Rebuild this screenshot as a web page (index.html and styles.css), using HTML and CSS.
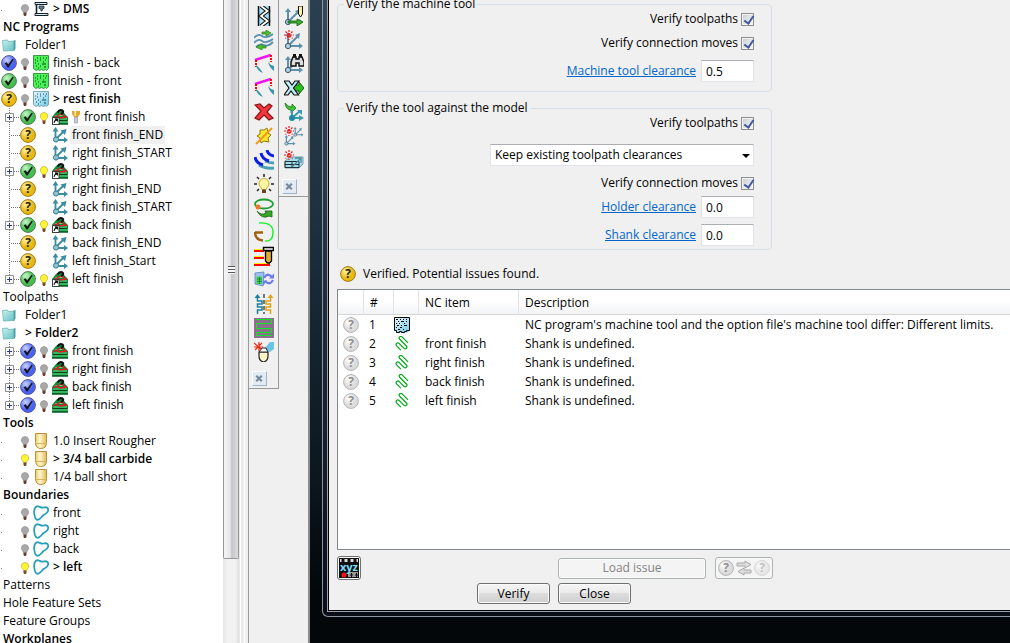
FILE: index.html
```html
<!DOCTYPE html>
<html lang="en">
<head>
<meta charset="UTF-8">
<meta name="viewport" content="width=device-width, initial-scale=1.0">
<title>NC Program Verification</title>
<link rel="stylesheet" href="styles.css">
</head>
<body>

<svg class="defs" aria-hidden="true">
  <defs>
    <radialGradient id="gBlue" cx="35%" cy="30%"><stop offset="0" stop-color="#ccd4ff"/><stop offset="1" stop-color="#4a62f4"/></radialGradient>
    <radialGradient id="gGreen" cx="35%" cy="30%"><stop offset="0" stop-color="#c8f8ca"/><stop offset="1" stop-color="#45bd50"/></radialGradient>
    <radialGradient id="gGold" cx="35%" cy="30%"><stop offset="0" stop-color="#fff3a0"/><stop offset="1" stop-color="#e8b810"/></radialGradient>
    <radialGradient id="gGrey" cx="35%" cy="30%"><stop offset="0" stop-color="#ffffff"/><stop offset="1" stop-color="#dcdcdc"/></radialGradient>
    <linearGradient id="gTool"><stop offset="0" stop-color="#efcb60"/><stop offset=".4" stop-color="#fff8d6"/><stop offset="1" stop-color="#e3b84a"/></linearGradient>
    <linearGradient id="gFolder" x2="1" y2="1"><stop offset="0" stop-color="#c8f3f1"/><stop offset="1" stop-color="#63bfc0"/></linearGradient>
    <linearGradient id="gCyan" x2="1" y2="1"><stop offset="0" stop-color="#e4f8ff"/><stop offset="1" stop-color="#6fcbe9"/></linearGradient>
  </defs>
  <symbol id="check-blue" viewBox="0 0 16 16"><circle cx="8" cy="8" r="7.4" fill="url(#gBlue)" stroke="#56589c"/><path d="M3.6 8.2l2-1 1.6 2.2 4.4-5.6 1.2.6-5.2 8.2H6.6z" fill="#16161c"/></symbol>
  <symbol id="check-green" viewBox="0 0 16 16"><circle cx="8" cy="8" r="7.4" fill="url(#gGreen)" stroke="#4c7c50"/><path d="M3.6 8.2l2-1 1.6 2.2 4.4-5.6 1.2.6-5.2 8.2H6.6z" fill="#10180f"/></symbol>
  <symbol id="ask" viewBox="0 0 16 16"><circle cx="8" cy="8" r="7.4" fill="url(#gGold)" stroke="#a07d1c"/><text x="8" y="12.4" class="mark">?</text></symbol>
  <symbol id="ask-grey" viewBox="0 0 16 16"><circle cx="8" cy="8" r="7.4" fill="url(#gGrey)" stroke="#b4b4b4"/><text x="8" y="12.4" class="mark mark-grey">?</text></symbol>
  <symbol id="bulb" viewBox="0 0 16 16"><path d="M8 3.5a3.7 3.7 0 0 0-2.2 6.7l.7 1.3h3l.7-1.3A3.7 3.7 0 0 0 8 3.5z" fill="#a8a8a8" stroke="#8c8c8c" stroke-width=".6"/><path d="M6.5 11.5h3v2.6l-.8 1H7.3l-.8-1z" fill="#6b3a34"/></symbol>
  <symbol id="bulb-on" viewBox="0 0 16 16"><path d="M8 3.5a3.7 3.7 0 0 0-2.2 6.7l.7 1.3h3l.7-1.3A3.7 3.7 0 0 0 8 3.5z" fill="#fff52e" stroke="#b0a332" stroke-width=".6"/><path d="M6.5 11.5h3v2.6l-.8 1H7.3l-.8-1z" fill="#7b4a22"/></symbol>
  <symbol id="folder" viewBox="0 0 16 16"><path d="M1.5 3.5l5-.5 1 1.5 6-.5v9.5l-11 .5z" fill="url(#gFolder)" stroke="#6fb3b4" stroke-width=".8"/><path d="M12.5 4l2-1.2v8.6l-1.8 2.2z" fill="#4f9fa2"/></symbol>
  <symbol id="machine" viewBox="0 0 16 16"><path d="M2 1.5h12v2H2zM2 12.5h13v2H2z" fill="#d9edf5" stroke="#14202a"/><path d="M3.5 3.5v9" stroke="#14202a" stroke-width="1.6"/><path d="M6 5h5v2.5H9.8L9 10H8l-.5-2.500H6z" fill="#5d7f93" stroke="#14202a" stroke-width=".7"/></symbol>
  <symbol id="tape" viewBox="0 0 16 16"><path d="M.5.5h15v13l-2 2-1-1-2 1-2-1-2 1-1.500-1-2 1-2.500-2z" fill="#4af257" stroke="#2a7a31" stroke-width=".8"/><path d="M2 5h1M4 3h1M4 6h1M7 3h1M7 5h1M10 3h1M13 3h1M12 5h1M10 7h1M2 8h1M5 9h1M9 9h4M3 11h1M7 11h1M11 12h2M5 13h1" stroke="#0a4312"/></symbol>
  <symbol id="tape-cyan" viewBox="0 0 16 16"><path d="M.5.5h15v13l-2 2-1-1-2 1-2-1-2 1-1.500-1-2 1-2.500-2z" fill="url(#gCyan)" stroke="#5f93a8" stroke-width=".8"/><path d="M2 5h1M4 3h1M4 6h1M7 3h1M7 5h1M10 3h1M13 3h1M12 5h1M10 7h1M2 8h1M5 9h1M9 9h4M3 11h1M7 11h1M11 12h2M5 13h1" stroke="#1b4658"/></symbol>
  <symbol id="tape-dark" viewBox="0 0 16 16"><path d="M.5.5h15v13l-2 2h-11l-2-2z" fill="url(#gCyan)"/><path d="M.5 13.500V.5h15v13M.5 13.500h2v2h3v-1h2v1h3v-1h2v-1h3" fill="none" stroke="#000"/><path d="M2 2.500h2M6 2.500h1M9 2.500h1M12 2.500h1M4 4.500h1M7 4.500h3M12 4.500h1M2 6.500h1M5 6.500h1M10 6.500h1M3 8.500h2M7 8.500h1M10 8.500h3M2 10.500h1M6 10.500h2M4 12.500h2M9 12.500h1" stroke="#000"/></symbol>
  <symbol id="path-stack" viewBox="0 0 16 16"><path d="M4 3l5-2.500 4 4.500 3 3v7.500H0V8z" fill="#0f8a3c"/><path d="M1 10h14M0 13h16M3 6.500h8" stroke="#5de07f" stroke-width="1.200"/><path d="M1 11.500h14M0 15h16" stroke="#063d1b"/><path d="M1 9l8-4 5 3M3 7l5 2 7-1" stroke="#e01b24" stroke-width="1.300" fill="none"/><path d="M5.500 3.500q2-3.500 5-2 2 2-1.500 3.500" stroke="#111" stroke-width="2" fill="none"/></symbol>
  <symbol id="path-link" viewBox="0 0 16 16"><use href="#path-stack"/><path d="M.5 8.500h6.500v7H.5z" fill="#fff" stroke="#222" stroke-width=".8"/><path d="M2 14q0-3 2.500-3.200M3 9.800h2.500v2.500z" fill="#000" stroke="#000" stroke-width=".8"/></symbol>
  <symbol id="axes" viewBox="0 0 16 16"><path d="M3.500 12V3M4 13h10M4 12l8-8" stroke="#3c8ca0" stroke-width="1.800" fill="none"/><path d="M.5 4.500l3-4.500 3 4.500zM12 10l4 3-4 3zM8.500 3.500l6-1.500-1.500 6z" fill="#3c8ca0"/><circle cx="4" cy="12.500" r="2.600" fill="#8cc3d1" stroke="#3c7e90"/></symbol>
  <symbol id="cutter" viewBox="0 0 16 16"><path d="M2.500.5h11v9q0 6-5.500 6t-5.500-6z" fill="url(#gTool)" stroke="#b8923a"/><path d="M3 10.500h10" stroke="#d8b45c"/></symbol>
  <symbol id="mini-tool" viewBox="0 0 8 16"><path d="M0 2h8v3L6 8H2L0 5z" fill="#e5a82b"/><path d="M2.500 2h1.500v5H2.500z" fill="#fff0ba"/><path d="M2.500 8h3v6h-3z" fill="#c9cdd2" stroke="#8d9299" stroke-width=".6"/></symbol>
  <symbol id="boundary" viewBox="0 0 16 16"><path d="M1.200 8C.8 4 2.500 1 5 1.300S8 3.200 10.500 2.500c3-.8 5.300.5 4.500 3.500s-3.500 3-5 4.500-3.500 5-6 4.200C1.800 14 1.500 11 1.200 8z" fill="#fff" stroke="#2aa0b8" stroke-width="1.800"/></symbol>
  <symbol id="branch" viewBox="0 0 20 18"><path d="M9.500 0v18M11 9.500h9" stroke="#777" stroke-dasharray="1 1" fill="none"/></symbol>
  <symbol id="branch-plus" viewBox="0 0 20 18"><path d="M9.500 0v18M14 9.500h6" stroke="#777" stroke-dasharray="1 1" fill="none"/><path d="M5.500 5.500h8v8h-8z" fill="#fafafa" stroke="#8f8f8f"/><path d="M7 9.500h5M9.500 7v5" stroke="#2b3f8f"/></symbol>
  <symbol id="branch-end" viewBox="0 0 20 18"><path d="M9.500 0v9M14 9.500h6" stroke="#777" stroke-dasharray="1 1" fill="none"/><path d="M5.500 5.500h8v8h-8z" fill="#fafafa" stroke="#8f8f8f"/><path d="M7 9.500h5M9.500 7v5" stroke="#2b3f8f"/></symbol>
  <symbol id="zigzag" viewBox="0 0 16 16"><path transform="translate(8 8) rotate(45)" d="M3.500 5.100H-2.500a1.700 1.700 0 0 1 0-3.400H4.500a1.700 1.700 0 0 0 0-3.400H-5a1.700 1.700 0 0 1 0-3.400H3.500" fill="none" stroke="#00a818" stroke-width="1.200"/></symbol>
  <symbol id="frame" viewBox="0 0 20 20"><path d="M4 15V5M4 16h12M4 16L14 6" stroke="#5f8fae" stroke-width="2" fill="none"/><path d="M1 6l3-4 3 4zM15 13l4 3-4 3zM11 5l5-2-1 6z" fill="#5f8fae"/><circle cx="4" cy="16" r="2.600" fill="#b5d0e0" stroke="#33566b"/></symbol>
  <symbol id="burst" viewBox="0 0 20 20"><path d="M5 0v10M0 5h10M1.500 1.500l7 7M8.500 1.500l-7 7" stroke="#f01818" stroke-width="1.200" stroke-dasharray="2 1"/></symbol>
  <symbol id="cross" viewBox="0 0 14 14"><path d="M3.500 4l6 6M9.500 4l-6 6" stroke="#75879a" stroke-width="2.200"/></symbol>
</svg>

<nav class="explorer">
  <ul class="tree">
    <li class="row"><svg class="slot stub"></svg><svg class="slot"><use href="#bulb"/></svg><svg class="slot"><use href="#machine"/></svg><span class="name bold">&gt; DMS</span></li>
    <li class="row head bold">NC Programs</li>
    <li class="row"><svg class="slot"><use href="#folder"/></svg><span class="name folder">Folder1</span></li>
    <li class="row"><svg class="slot"><use href="#check-blue"/></svg><svg class="slot"><use href="#bulb"/></svg><svg class="slot"><use href="#tape"/></svg><span class="name">finish - back</span></li>
    <li class="row"><svg class="slot"><use href="#check-green"/></svg><svg class="slot"><use href="#bulb"/></svg><svg class="slot"><use href="#tape"/></svg><span class="name">finish - front</span></li>
    <li class="row"><svg class="slot"><use href="#ask"/></svg><svg class="slot"><use href="#bulb"/></svg><svg class="slot"><use href="#tape-cyan"/></svg><span class="name bold">&gt; rest finish</span></li>
    <li class="row child"><svg class="branch"><use href="#branch-plus"/></svg><svg class="slot"><use href="#check-green"/></svg><svg class="slot"><use href="#bulb-on"/></svg><svg class="slot"><use href="#path-link"/></svg><svg class="mini"><use href="#mini-tool"/></svg><span class="name">front finish</span></li>
    <li class="row child"><svg class="branch"><use href="#branch"/></svg><svg class="slot"><use href="#ask"/></svg><svg class="slot"></svg><svg class="slot"><use href="#axes"/></svg><span class="name selected">front finish_END</span></li>
    <li class="row child"><svg class="branch"><use href="#branch"/></svg><svg class="slot"><use href="#ask"/></svg><svg class="slot"></svg><svg class="slot"><use href="#axes"/></svg><span class="name">right finish_START</span></li>
    <li class="row child"><svg class="branch"><use href="#branch-plus"/></svg><svg class="slot"><use href="#check-green"/></svg><svg class="slot"><use href="#bulb-on"/></svg><svg class="slot"><use href="#path-link"/></svg><span class="name">right finish</span></li>
    <li class="row child"><svg class="branch"><use href="#branch"/></svg><svg class="slot"><use href="#ask"/></svg><svg class="slot"></svg><svg class="slot"><use href="#axes"/></svg><span class="name">right finish_END</span></li>
    <li class="row child"><svg class="branch"><use href="#branch"/></svg><svg class="slot"><use href="#ask"/></svg><svg class="slot"></svg><svg class="slot"><use href="#axes"/></svg><span class="name">back finish_START</span></li>
    <li class="row child"><svg class="branch"><use href="#branch-plus"/></svg><svg class="slot"><use href="#check-green"/></svg><svg class="slot"><use href="#bulb-on"/></svg><svg class="slot"><use href="#path-link"/></svg><span class="name">back finish</span></li>
    <li class="row child"><svg class="branch"><use href="#branch"/></svg><svg class="slot"><use href="#ask"/></svg><svg class="slot"></svg><svg class="slot"><use href="#axes"/></svg><span class="name">back finish_END</span></li>
    <li class="row child"><svg class="branch"><use href="#branch"/></svg><svg class="slot"><use href="#ask"/></svg><svg class="slot"></svg><svg class="slot"><use href="#axes"/></svg><span class="name">left finish_Start</span></li>
    <li class="row child"><svg class="branch"><use href="#branch-end"/></svg><svg class="slot"><use href="#check-green"/></svg><svg class="slot"><use href="#bulb-on"/></svg><svg class="slot"><use href="#path-link"/></svg><span class="name">left finish</span></li>
    <li class="row head">Toolpaths</li>
    <li class="row"><svg class="slot"><use href="#folder"/></svg><span class="name folder">Folder1</span></li>
    <li class="row"><svg class="slot"><use href="#folder"/></svg><span class="name folder bold">&gt; Folder2</span></li>
    <li class="row child"><svg class="branch"><use href="#branch-plus"/></svg><svg class="slot"><use href="#check-blue"/></svg><svg class="slot"><use href="#bulb"/></svg><svg class="slot"><use href="#path-stack"/></svg><span class="name">front finish</span></li>
    <li class="row child"><svg class="branch"><use href="#branch-plus"/></svg><svg class="slot"><use href="#check-blue"/></svg><svg class="slot"><use href="#bulb"/></svg><svg class="slot"><use href="#path-stack"/></svg><span class="name">right finish</span></li>
    <li class="row child"><svg class="branch"><use href="#branch-plus"/></svg><svg class="slot"><use href="#check-blue"/></svg><svg class="slot"><use href="#bulb"/></svg><svg class="slot"><use href="#path-stack"/></svg><span class="name">back finish</span></li>
    <li class="row child"><svg class="branch"><use href="#branch-end"/></svg><svg class="slot"><use href="#check-blue"/></svg><svg class="slot"><use href="#bulb"/></svg><svg class="slot"><use href="#path-stack"/></svg><span class="name">left finish</span></li>
    <li class="row head bold">Tools</li>
    <li class="row"><svg class="slot stub"></svg><svg class="slot"><use href="#bulb"/></svg><svg class="slot"><use href="#cutter"/></svg><span class="name">1.0 Insert Rougher</span></li>
    <li class="row"><svg class="slot stub"></svg><svg class="slot"><use href="#bulb-on"/></svg><svg class="slot"><use href="#cutter"/></svg><span class="name bold">&gt; 3/4 ball carbide</span></li>
    <li class="row"><svg class="slot stub"></svg><svg class="slot"><use href="#bulb"/></svg><svg class="slot"><use href="#cutter"/></svg><span class="name">1/4 ball short</span></li>
    <li class="row head bold">Boundaries</li>
    <li class="row"><svg class="slot stub"></svg><svg class="slot"><use href="#bulb"/></svg><svg class="slot"><use href="#boundary"/></svg><span class="name">front</span></li>
    <li class="row"><svg class="slot stub"></svg><svg class="slot"><use href="#bulb"/></svg><svg class="slot"><use href="#boundary"/></svg><span class="name">right</span></li>
    <li class="row"><svg class="slot stub"></svg><svg class="slot"><use href="#bulb"/></svg><svg class="slot"><use href="#boundary"/></svg><span class="name">back</span></li>
    <li class="row"><svg class="slot stub"></svg><svg class="slot"><use href="#bulb-on"/></svg><svg class="slot"><use href="#boundary"/></svg><span class="name bold">&gt; left</span></li>
    <li class="row head">Patterns</li>
    <li class="row head">Hole Feature Sets</li>
    <li class="row head">Feature Groups</li>
    <li class="row head bold">Workplanes</li>
  </ul>
</nav>
<div class="scrollbar"><div class="thumb"><span class="grip"></span></div></div>
<div class="splitter"></div>

<div class="toolbars">
  <div class="toolbar">
    <button class="tool" aria-label="Mirror"><svg viewBox="0 0 20 20"><path d="M4 0h12v20H4z" fill="#a5e2f5"/><path d="M4.500 0v20M15.500 0v20" stroke="#111" stroke-width="1.500"/><path d="M7 0l6.500 5L7 10l6.500 5L7 20" fill="none" stroke="#111" stroke-width="4"/><path d="M7 0l6.500 5L7 10l6.500 5L7 20" fill="none" stroke="#fff" stroke-width="1.800"/></svg></button>
    <button class="tool" aria-label="Reorder"><svg viewBox="0 0 20 20"><path d="M0 8q4-5 8-2t11-2M0 13q4-5 8-2t11-2M2 17q4-4 8-2t9-3" fill="none" stroke="#5991ad" stroke-width="1.800"/><path d="M8 2h4V0l5 3-5 3V4H8zM12 16H8v-2l-6 3 6 3v-2h4z" fill="#4cc030" stroke="#287c1a" stroke-width=".7"/></svg></button>
    <button class="tool" aria-label="Move start"><svg viewBox="0 0 20 20"><path d="M1 6L17 1" stroke="#f015e6" stroke-width="2.600"/><path d="M2 6v7M17 1v7" stroke="#f00" stroke-width="2" stroke-dasharray="2 1"/><path d="M2 11q3 2 7 8-6-2-7-8zM14 8q2 3 6 4v5q-5-4-6-9z" fill="#3796a8"/></svg></button>
    <button class="tool" aria-label="Move end"><svg viewBox="0 0 20 20"><path d="M1 6L17 1" stroke="#f015e6" stroke-width="2.600"/><path d="M2 6v7M17 1v7" stroke="#f00" stroke-width="2" stroke-dasharray="2 1"/><path d="M2 11q3 2 7 8-6-2-7-8zM14 8q2 3 6 4v5q-5-4-6-9z" fill="#3796a8"/></svg></button>
    <button class="tool" aria-label="Delete"><svg viewBox="0 0 20 20"><path d="M1 3l5-1 4 4 5-4 3 2-5 6 6 6-4 2-5-5-5 5-4-2 6-7z" fill="#f0383c" stroke="#8d1216" stroke-width="1.200"/></svg></button>
    <button class="tool" aria-label="Limit"><svg viewBox="0 0 20 20"><path d="M6 4h4l3-2 1 5 3 2-3 3 1 4-5-1-3 2-1-5-3-2 3-2z" fill="#ffe52c" stroke="#8d7a10"/><path d="M2 18L18 2" stroke="#f09a18" stroke-width="2"/></svg></button>
    <button class="tool" aria-label="Leads and links"><svg viewBox="0 0 20 20"><path d="M5 15q6 4 15 3M11 11q4 2 9 2" fill="none" stroke="#4a9fb4" stroke-width="3"/><path d="M1 7q1 6 8 8M7 3q1 6 8 8M13 0q1 5 7 6" fill="none" stroke="#0c1ee6" stroke-width="3"/></svg></button>
    <button class="tool" aria-label="Show"><svg viewBox="0 0 20 20"><path d="M10 0v3M3 3l2 2M17 3l-2 2M0 10h3M17 10h3M3 17l2-2M17 17l-2-2" stroke="#222" stroke-width="1.500"/><path d="M10 4.500a5 5 0 0 0-3 9l1 2h4l1-2a5 5 0 0 0-3-9z" fill="#fff6a0" stroke="#c9b13a"/><path d="M8 15.500h4V19H8z" fill="#6b4226"/></svg></button>
    <button class="tool" aria-label="Closed segment"><svg viewBox="0 0 20 20"><ellipse cx="10" cy="6" rx="9" ry="4.500" fill="none" stroke="#1e9e32" stroke-width="1.800"/><circle cx="4" cy="9" r="2.500" fill="#f07820"/><path d="M3 13q4 5 9 2l-1-2h7v6l-3-1q-7 4-12-5z" fill="#39a82a" stroke="#1c6014" stroke-width=".8"/></svg></button>
    <button class="tool" aria-label="Arc"><svg viewBox="0 0 20 20"><path d="M5 1q14-1 14 9t-8 9" fill="none" stroke="#18f028" stroke-width="1.400"/><path d="M1 10.500h8M1 10q0 8 8 8.500" fill="none" stroke="#a0620e" stroke-width="2.400"/></svg></button>
    <button class="tool" aria-label="Feed rates"><svg viewBox="0 0 20 20"><path d="M0 5h10M0 12h10M0 19h16" stroke="#f00" stroke-width="2"/><path d="M0 3.500h10M0 10.500h10M0 17.500h16" stroke="#ffe81c"/><path d="M9.500 1.500h10v3h-10z" fill="#fff" stroke="#000" stroke-width="1.500"/><path d="M11.500 5h6v10l-2 2h-2l-2-2z" fill="#e1ac35" stroke="#000" stroke-width="1.300"/></svg></button>
    <button class="tool" aria-label="Recalculate"><svg viewBox="0 0 20 20"><path d="M1 3l9-1-1 14-8-2z" fill="#9cc2ee" stroke="#5c80b8" stroke-width=".8"/><path d="M2.500 6.500H8V14H2.500z" fill="#40d354"/><path d="M3 9h5M3 11.500h5M5.500 7v7" stroke="#1f7c30" stroke-width=".8"/><path d="M10 8q3-6 8-1M19 10q-3 6-8 1" fill="none" stroke="#6d7cf0" stroke-width="2.300"/><path d="M15 8.500h5V3.500zM13.500 10.500H9v5z" fill="#6d7cf0"/></svg></button>
    <button class="tool" aria-label="Split"><svg viewBox="0 0 20 20"><path d="M3.500 3v4H8v3H3.500v3H8v3H3.500v4" fill="none" stroke="#1e7f9b" stroke-width="1.500"/><path d="M16.500 3v4H12v3h4.500v3H12v3h4.500v4" fill="none" stroke="#dba520" stroke-width="1.500"/><path d="M.5 4l3-4 3 4z" fill="#1e7f9b"/><path d="M13.500 4l3-4 3 4z" fill="#dba520"/><path d="M10 0v20" stroke="#000" stroke-dasharray="4 2"/></svg></button>
    <button class="tool" aria-label="Raster"><svg viewBox="0 0 20 20"><path d="M0 0h20v20H0z" fill="#8b6f8d"/><path d="M2 1.500h15.500v4h-15v5h15v4h-15v3H18" fill="none" stroke="#12e62a" stroke-width="1"/></svg></button>
    <button class="tool" aria-label="Tool options"><svg viewBox="0 0 20 20"><path d="M0 1l8 7M1 8l7-7M5 0v9M0 5h9" stroke="#f02a12" stroke-width="1.200"/><path d="M11 6l5-6h4v7l-4 3z" fill="#6dc3e4"/><path d="M5 10h9v4q0 5-4.500 6Q5 19 5 14z" fill="#fff3c8" stroke="#222" stroke-width="1.200"/><path d="M5 10l3-4h4l2 4z" fill="#fff" stroke="#222"/></svg></button>
    <button class="close" aria-label="Close toolbar"><svg viewBox="0 0 14 14"><use href="#cross"/></svg></button>
  </div>
  <div class="toolbar">
    <button class="tool" aria-label="Workplane at tool"><svg viewBox="0 0 20 20"><use href="#frame"/><path d="M4 15h9v-2l6 3-6 4v-3H4z" fill="#35b428" stroke="#175c12" stroke-width=".8"/><path d="M14.500 0h4v8l-2 3-2-3z" fill="#fff3a5" stroke="#111"/></svg></button>
    <button class="tool" aria-label="New workplane"><svg viewBox="0 0 20 20"><use href="#frame"/><use href="#burst"/></svg></button>
    <button class="tool" aria-label="Find workplane"><svg viewBox="0 0 20 20"><use href="#frame"/><path d="M9 3h3v2h3V3h3l2 5v4h-5V9h-3v3H7V8z" fill="#ddd" stroke="#111" stroke-width="1.500"/><path d="M9 0h3v3H9zM15 0h3v3h-3z" fill="#111"/></svg></button>
    <button class="tool" aria-label="Transform"><svg viewBox="0 0 20 20"><path d="M8 7h7V4l5 6-5 6v-3H8z" fill="#28c01e" stroke="#145f10"/><path d="M0 3h5l3 4 3-4h4L9.500 10l5 7H10l-3-4-3 4H0l5-7z" fill="#bfeefa" stroke="#111" stroke-width="1.200"/></svg></button>
    <button class="tool" aria-label="Activate workplane"><svg viewBox="0 0 20 20"><path d="M1 1q1 7 6 7v3l5-5-4-4v3Q4 5 1 1z" fill="#40c42c" stroke="#1d6c16" stroke-width=".8"/><path d="M8 16V8M8 16h9M8 16l8-7" stroke="#3b9baf" stroke-width="2"/><path d="M13 8h5v5zM15 13l5 3-5 3z" fill="#3b9baf"/><circle cx="8" cy="16" r="3" fill="#1f8aa0"/></svg></button>
    <button class="tool" aria-label="Multiple workplanes"><svg viewBox="0 0 20 20"><use href="#frame" x="0" y="8" width="12" height="12"/><use href="#frame" x="9" y="0" width="11" height="11"/><use href="#burst"/></svg></button>
    <button class="tool" aria-label="Workplane on block"><svg viewBox="0 0 20 20"><path d="M1 11l5-4h13v7l-4 4H1z" fill="#a5dcea" stroke="#7a9aa5"/><path d="M1 11.500h14v6H1zM8 11v7M1 14.500h14" fill="none" stroke="#1d3038"/><path d="M9 16l7-7M11 8h6v5" fill="none" stroke="#4a8ea3" stroke-width="1.300"/><use href="#burst"/></svg></button>
    <button class="close" aria-label="Close toolbar"><svg viewBox="0 0 14 14"><use href="#cross"/></svg></button>
  </div>
</div>

<main class="desktop">
  <div class="glass">
    <form class="dialog">
      <fieldset class="group">
        <legend>Verify the machine tool</legend>
        <label class="check">Verify toolpaths <input type="checkbox" checked></label>
        <label class="check">Verify connection moves <input type="checkbox" checked></label>
        <div class="field"><a href="#" id="machineClearance">Machine tool clearance</a><input type="text" value="0.5" aria-labelledby="machineClearance"></div>
      </fieldset>

      <fieldset class="group group-model">
        <legend>Verify the tool against the model</legend>
        <label class="check">Verify toolpaths <input type="checkbox" checked></label>
        <div class="combo">
          <select aria-label="Toolpath clearances"><option>Keep existing toolpath clearances</option></select>
        </div>
        <label class="check">Verify connection moves <input type="checkbox" checked></label>
        <div class="field"><a href="#" id="holderClearance">Holder clearance</a><input type="text" value="0.0" aria-labelledby="holderClearance"></div>
        <div class="field"><a href="#" id="shankClearance">Shank clearance</a><input type="text" value="0.0" aria-labelledby="shankClearance"></div>
      </fieldset>

      <div class="status"><svg class="slot"><use href="#ask"/></svg>Verified. Potential issues found.</div>

      <div class="issues">
        <table>
          <colgroup><col class="col-state"><col class="col-num"><col class="col-icon"><col class="col-item"><col></colgroup>
          <thead>
            <tr><th></th><th>#</th><th></th><th>NC item</th><th>Description</th></tr>
          </thead>
          <tbody>
            <tr><td><svg class="slot"><use href="#ask-grey"/></svg></td><td>1</td><td><svg class="slot"><use href="#tape-dark"/></svg></td><td></td><td>NC program's machine tool and the option file's machine tool differ: Different limits.</td></tr>
            <tr><td><svg class="slot"><use href="#ask-grey"/></svg></td><td>2</td><td><svg class="slot"><use href="#zigzag"/></svg></td><td>front finish</td><td>Shank is undefined.</td></tr>
            <tr><td><svg class="slot"><use href="#ask-grey"/></svg></td><td>3</td><td><svg class="slot"><use href="#zigzag"/></svg></td><td>right finish</td><td>Shank is undefined.</td></tr>
            <tr><td><svg class="slot"><use href="#ask-grey"/></svg></td><td>4</td><td><svg class="slot"><use href="#zigzag"/></svg></td><td>back finish</td><td>Shank is undefined.</td></tr>
            <tr><td><svg class="slot"><use href="#ask-grey"/></svg></td><td>5</td><td><svg class="slot"><use href="#zigzag"/></svg></td><td>left finish</td><td>Shank is undefined.</td></tr>
          </tbody>
        </table>
      </div>

      <div class="actions">
        <button type="button" class="btn btn-icon" aria-label="Machine tool position"><svg viewBox="0 0 20 20"><path d="M0 0h20v20H0z" fill="#111"/><path d="M1 1h18v3H1z" fill="#ddd"/><path d="M4 1v4M10 1v4M16 1v4" stroke="#111" stroke-width="3"/><path d="M9 14h10v5H9z" fill="#999"/><path d="M11 17h3M16 17h3M12.500 15v4M17.500 15v4" stroke="#111"/><text x="10" y="13" class="xyz">xyz</text><circle cx="5" cy="17" r="2.500" fill="#f01414"/></svg></button>
        <button type="button" class="btn btn-load" disabled>Load issue</button>
        <button type="button" class="btn btn-swap" aria-label="Swap issue state" disabled><svg class="slot"><use href="#ask-grey"/></svg><svg class="slot" viewBox="0 0 16 16"><path d="M1 3h8V1l6 3.500L9 8V6H1zM15 10H8V8l-6 3.500L8 15v-2h7z" fill="#ddd" stroke="#aaa"/></svg><svg class="slot faint"><use href="#ask-grey"/></svg></button>
      </div>
      <div class="actions actions-main">
        <button type="button" class="btn">Verify</button>
        <button type="button" class="btn">Close</button>
      </div>
    </form>
  </div>
</main>

</body>
</html>
```
FILE: styles.css
```css
* {
  box-sizing: border-box;
}
body {
  margin: 0;
  height: 100vh;
  display: flex;
  overflow: hidden;
  background-color: #f0f0f0;
  font-family: "Open Sans", "Noto Sans", sans-serif;
  font-size: 12px;
  line-height: 16px;
  color: #000;
}
button, input, select {
  font: inherit;
  color: inherit;
  margin: 0;
}
svg {
  display: block;
  flex: none;
}
.defs {
  width: 0;
  height: 0;
  position: absolute;
}
.mark {
  font-size: 12px;
  font-weight: bold;
  text-anchor: middle;
  fill: #2b2410;
}
.mark-grey {
  fill: #8f8f8f;
}
.xyz {
  font-size: 11px;
  font-weight: bold;
  text-anchor: middle;
  fill: #7fdcf8;
}
.bold {
  font-weight: 600;
}
.slot {
  width: 16px;
  height: 16px;
}

/* explorer tree */
.explorer {
  flex: 0 0 223px;
  overflow: hidden;
  background-color: #fff;
}
.tree {
  list-style: none;
  margin: 0;
  padding: 0;
}
.row {
  display: flex;
  align-items: center;
  height: 18px;
  padding-left: 1px;
  line-height: 18px;
  white-space: nowrap;
}
.row.head {
  padding-left: 3px;
}
.row.child {
  padding-left: 0;
}
.stub {
  background: linear-gradient(#888, #888) 0 9px / 1px 1px no-repeat;
}
.branch {
  width: 20px;
  height: 18px;
}
.mini {
  width: 8px;
  height: 16px;
  margin-left: 4px;
}
.name {
  margin-left: 2px;
  padding: 0 2px;
}
.name.folder {
  margin-left: 6px;
}
.selected {
  background-color: #f0f0f0;
}
.scrollbar {
  flex: 0 0 16px;
  background: linear-gradient(90deg, #e6e6e6, #f2f2f2 30%, #f0f0f0 80%, #dedede);
}
.thumb {
  height: 87%;
  display: flex;
  align-items: center;
  justify-content: center;
  border: 1px solid #979797;
  border-top: none;
  border-radius: 0 0 2px 2px;
  background: linear-gradient(90deg, #f5f5f5, #e6e6e8 45%, #c4c5c9 55%, #dcdcdf);
}
.grip {
  width: 7px;
  height: 8px;
  margin-bottom: 18px;
  background: repeating-linear-gradient(#555 0 1px, #f8f8f8 1px 3px);
}
.splitter {
  flex: 0 0 9px;
  background: linear-gradient(90deg, #e8e8e8 1px, #fff 1px 2px, #ececec 2px 5px, #fff 5px 6px, #f0f0f0 6px);
}

/* toolbars */
.toolbars {
  flex: 0 0 62px;
  display: flex;
  align-items: flex-start;
  border-left: 1px solid #999;
  border-right: 2px solid #8b8b8b;
}
.toolbar {
  width: 30px;
  padding: 4px 0 2px;
  border-right: 1px solid #999;
  border-bottom: 1px solid #999;
}
.toolbar:last-child {
  width: 29px;
  border-right: none;
}
.tool {
  display: flex;
  align-items: center;
  justify-content: center;
  width: 100%;
  height: 24px;
  padding: 0;
  border: none;
  background: none;
}
.tool svg {
  width: 20px;
  height: 20px;
}
.close {
  display: block;
  width: 15px;
  height: 15px;
  margin: 7px 0 0 3px;
  padding: 0;
  border: 1px solid;
  border-color: #fff #9fb4c8 #9fb4c8 #fff;
  background-color: #e2ebf4;
}

/* dialog */
.desktop {
  flex: 1;
  min-width: 0;
  display: flex;
  padding: 0 0 26px 12px;
  background: linear-gradient(#2a3f50, #1c303e 35%, #0b161e 75%, #03070a 92%);
}
.glass {
  flex: 1;
  min-width: 0;
  display: flex;
  padding: 0 0 4px 4px;
  border: 1px solid #8c959f;
  border-width: 0 0 1px 1px;
  border-bottom-left-radius: 6px;
  background: linear-gradient(#34485a, #1d2c3a 50%, #0a0d18);
}
.dialog {
  flex: 1;
  min-width: 0;
  display: flex;
  flex-direction: column;
  padding: 0 0 7px 8px;
  border: 1px solid #9aa1a8;
  border-width: 0 0 1px 1px;
  box-shadow: inset 1px -1px #000;
  background-color: #f0f0f0;
}
.group {
  width: 435px;
  margin: -4px 0 8px 1px;
  padding: 0 17px 9px;
  border: 1px solid #d5dfe5;
  border-radius: 4px;
  display: flex;
  flex-direction: column;
  align-items: flex-end;
  gap: 10px;
}
.group-model {
  margin: 0 0 0 1px;
  padding-bottom: 3px;
  gap: 6px;
}
.group legend {
  margin-left: -11px;
  padding: 0 2px;
}
.check {
  display: flex;
  align-items: center;
  gap: 3px;
  height: 14px;
}
.check input {
  appearance: none;
  width: 13px;
  height: 13px;
  border: 1px solid #8e8f8f;
  background: linear-gradient(135deg, #c8cdd5, #f8f8f8);
  box-shadow: inset 0 0 0 1px #f4f4f4;
}
.check input:checked::after {
  content: "";
  display: block;
  width: 4px;
  height: 8px;
  margin-left: 4px;
  border: solid #42599b;
  border-width: 0 2px 2px 0;
  transform: rotate(35deg);
}
.combo {
  position: relative;
  margin: 8px 0 4px;
}
.combo select {
  display: block;
  appearance: none;
  width: 264px;
  height: 22px;
  padding: 0 4px;
  border: 1px solid #e2e3ea;
  border-top-color: #abadb3;
  border-radius: 0;
  background-color: #fff;
}
.combo::after {
  content: "";
  position: absolute;
  right: 4px;
  top: 10px;
  border: 4px solid transparent;
  border-top-color: #000;
  border-bottom: none;
}
.field {
  display: flex;
  align-items: center;
  gap: 5px;
}
.field a {
  color: #0066cc;
}
.field input {
  width: 53px;
  height: 22px;
  padding: 0 4px;
  border: 1px solid #e2e3ea;
  border-top-color: #abadb3;
}
.status {
  display: flex;
  align-items: center;
  gap: 7px;
  height: 39px;
  padding: 8px 0 0 4px;
}
.issues {
  flex: 1;
  min-height: 0;
  margin-left: 1px;
  overflow: hidden;
  border: 1px solid #828790;
  border-right: none;
  background-color: #fff;
}
.issues table {
  width: 100%;
  table-layout: fixed;
  border-collapse: separate;
  border-spacing: 0;
}
.col-state {
  width: 26px;
}
.col-num {
  width: 30px;
}
.col-icon {
  width: 25px;
}
.col-item {
  width: 100px;
}
.issues th {
  height: 25px;
  padding: 2px 6px 0;
  border-right: 1px solid #e2e3e6;
  border-bottom: 1px solid #d5d5d5;
  background: linear-gradient(#fff 45%, #f2f3f5);
  font-weight: normal;
  text-align: left;
}
.issues td {
  height: 19px;
  padding: 0 0 0 6px;
  white-space: nowrap;
}
.issues td:first-child {
  padding-left: 5px;
}
.issues td:nth-child(2) {
  padding-left: 5px;
}
.issues td:nth-child(3) {
  padding-left: 0;
}
.issues th:last-child {
  border-right: none;
}
.actions {
  display: flex;
  align-items: center;
  width: 437px;
  padding: 6px 0 3px 1px;
}
.actions-main {
  gap: 8px;
  padding: 0 0 0 141px;
}
.btn {
  width: 73px;
  height: 21px;
  padding: 0;
  border: 1px solid #707070;
  border-radius: 3px;
  background: linear-gradient(#f4f4f4, #ebebeb 50%, #dddddd 50%, #cfcfcf);
  box-shadow: inset 0 0 0 1px #fafafa;
  line-height: 16px;
}
.btn:disabled {
  border-color: #adb2b5;
  background: #f4f4f4;
  color: #838383;
}
.btn-icon {
  width: 24px;
  height: 24px;
}
.btn-icon svg {
  width: 20px;
  height: 20px;
  margin: 0 auto;
}
.btn-load {
  width: 148px;
  margin: 0 9px 0 auto;
}
.btn-swap {
  display: flex;
  align-items: center;
  justify-content: center;
  gap: 2px;
  width: 58px;
  height: 22px;
}
.faint {
  opacity: .5;
}
```
